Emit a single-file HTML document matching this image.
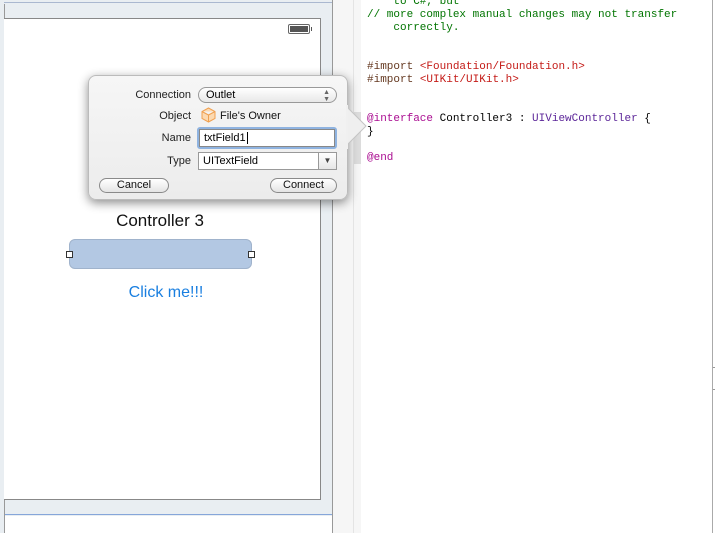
<!DOCTYPE html>
<html><head><meta charset="utf-8"><style>
*{margin:0;padding:0;box-sizing:border-box}
body{width:715px;height:533px;overflow:hidden;background:#fff;position:relative;font-family:"Liberation Sans",sans-serif}
.a{position:absolute}
.code{font-family:"Liberation Mono",monospace;font-size:11px;line-height:13px;white-space:pre;color:#000}
.lbl{position:absolute;font-size:11px;text-align:right;width:80px;left:111px;color:#222}
.btn{position:absolute;height:15px;border:1px solid #8a8a8a;border-radius:8px;background:linear-gradient(#fff,#e4e4e4);font-size:11px;text-align:center;line-height:13px;color:#111}
</style></head><body>
<div class="a" style="left:0;top:0;width:332px;height:533px;background:#e9eef2"></div>
<div class="a" style="left:4px;top:0;width:328px;height:3px;border-bottom:1px solid #aab8d0;background:#e9eef2"></div>
<div class="a" style="left:4px;top:4px;width:1px;height:529px;background:#999"></div>
<div class="a" style="left:4px;top:18px;width:317px;height:482px;background:#fff;border:1px solid #888;border-left:none"></div>
<div class="a" style="left:288px;top:24px;width:22px;height:10px;border:1px solid #666;border-radius:2px;padding:1px"><div style="width:100%;height:100%;background:#555"></div></div>
<div class="a" style="left:311px;top:27px;width:1px;height:4px;background:#555"></div>
<div class="a" style="left:160px;top:211px;font-size:17px;transform:translateX(-50%);color:#111">Controller 3</div>
<div class="a" style="left:69px;top:239px;width:183px;height:30px;background:#b3c8e3;border:1px solid #a0b3cc;border-radius:6px"></div>
<div class="a" style="left:66px;top:251px;width:7px;height:7px;background:#fff;border:1px solid #333"></div>
<div class="a" style="left:248px;top:251px;width:7px;height:7px;background:#fff;border:1px solid #333"></div>
<div class="a" style="left:166px;top:284px;font-size:16px;transform:translateX(-50%);color:#1a7fe0">Click me!!!</div>
<div class="a" style="left:5px;top:514px;width:327px;height:1px;background:#86a6da"></div>
<div class="a" style="left:5px;top:516px;width:327px;height:17px;background:#fff"></div>
<div class="a" style="left:332px;top:0;width:1px;height:533px;background:#999"></div>
<div class="a" style="left:333px;top:0;width:28px;height:533px;background:#f6f6f6"></div>
<div class="a" style="left:353px;top:0;width:1px;height:533px;background:#e4e4e4"></div>
<div class="a" style="left:354px;top:112px;width:7px;height:52px;background:#dcdcdc"></div>
<div class="a" style="left:712px;top:0;width:1px;height:533px;background:#aaa"></div>
<div class="a" style="left:713px;top:367px;width:2px;height:1px;background:#999"></div>
<div class="a" style="left:713px;top:389px;width:2px;height:1px;background:#999"></div>
<div class="a code" style="left:367px;top:-4px;color:#007400">    to C#, but
// more complex manual changes may not transfer
    correctly.</div>
<div class="a code" style="left:367px;top:61px"><span style="color:#643820">#import</span> <span style="color:#c41a16">&lt;Foundation/Foundation.h&gt;</span>
<span style="color:#643820">#import</span> <span style="color:#c41a16">&lt;UIKit/UIKit.h&gt;</span></div>
<div class="a code" style="left:367px;top:113px"><span style="color:#aa0d91">@interface</span> Controller3 : <span style="color:#5c2699">UIViewController</span> {
}

<span style="color:#aa0d91">@end</span></div>
<div class="a" style="left:88px;top:75px;width:260px;height:125px;background:linear-gradient(#f6f6f6,#ececec);border-radius:8px;box-shadow:0 3px 10px rgba(0,0,0,.45);border:1px solid #bbb"></div>
<svg class="a" style="left:346px;top:105px" width="24" height="44"><path d="M1 2 L20 21 L1 40 Z" fill="#efefef" stroke="#c4c4c4"/><rect x="0" y="0" width="2" height="44" fill="#f0f0f0"/></svg>
<div class="lbl" style="top:89px">Connection</div>
<div class="lbl" style="top:110px">Object</div>
<div class="lbl" style="top:132px">Name</div>
<div class="lbl" style="top:155px">Type</div>
<div class="a" style="left:198px;top:87px;width:139px;height:16px;border:1px solid #999;border-radius:8px;background:linear-gradient(#fff,#e8e8e8);font-size:11px;line-height:14px;padding-left:7px">Outlet<span style="position:absolute;right:6px;font-size:7px;line-height:7px;color:#666;top:1px">▲<br>▼</span></div>
<svg class="a" style="left:201px;top:107px" width="15" height="16"><path d="M7.5 1 L14 4.5 L14 11.5 L7.5 15 L1 11.5 L1 4.5 Z M1 4.5 L7.5 8 L14 4.5 M7.5 8 L7.5 15" fill="#fcd9b0" stroke="#f0a050" stroke-width="1"/></svg>
<div class="a" style="left:220px;top:110px;font-size:11px;color:#111">File's Owner</div>
<div class="a" style="left:197px;top:127px;width:140px;height:22px;border:2px solid #8fb3e0;border-radius:3px"></div>
<div class="a" style="left:199px;top:129px;width:136px;height:18px;background:#fff;border:1px solid #888;font-size:11px;line-height:16px;padding-left:4px">txtField1<span style="border-left:1px solid #000;margin-left:1px"></span></div>
<div class="a" style="left:198px;top:152px;width:139px;height:18px;background:#fff;border:1px solid #999;font-size:11px;line-height:16px;padding-left:4px">UITextField</div>
<div class="a" style="left:318px;top:152px;width:19px;height:18px;border:1px solid #999;background:linear-gradient(#fff,#e6e6e6);font-size:8px;text-align:center;line-height:16px;color:#444">▼</div>
<div class="btn" style="left:99px;top:178px;width:70px">Cancel</div>
<div class="btn" style="left:270px;top:178px;width:67px">Connect</div>
</body></html>
